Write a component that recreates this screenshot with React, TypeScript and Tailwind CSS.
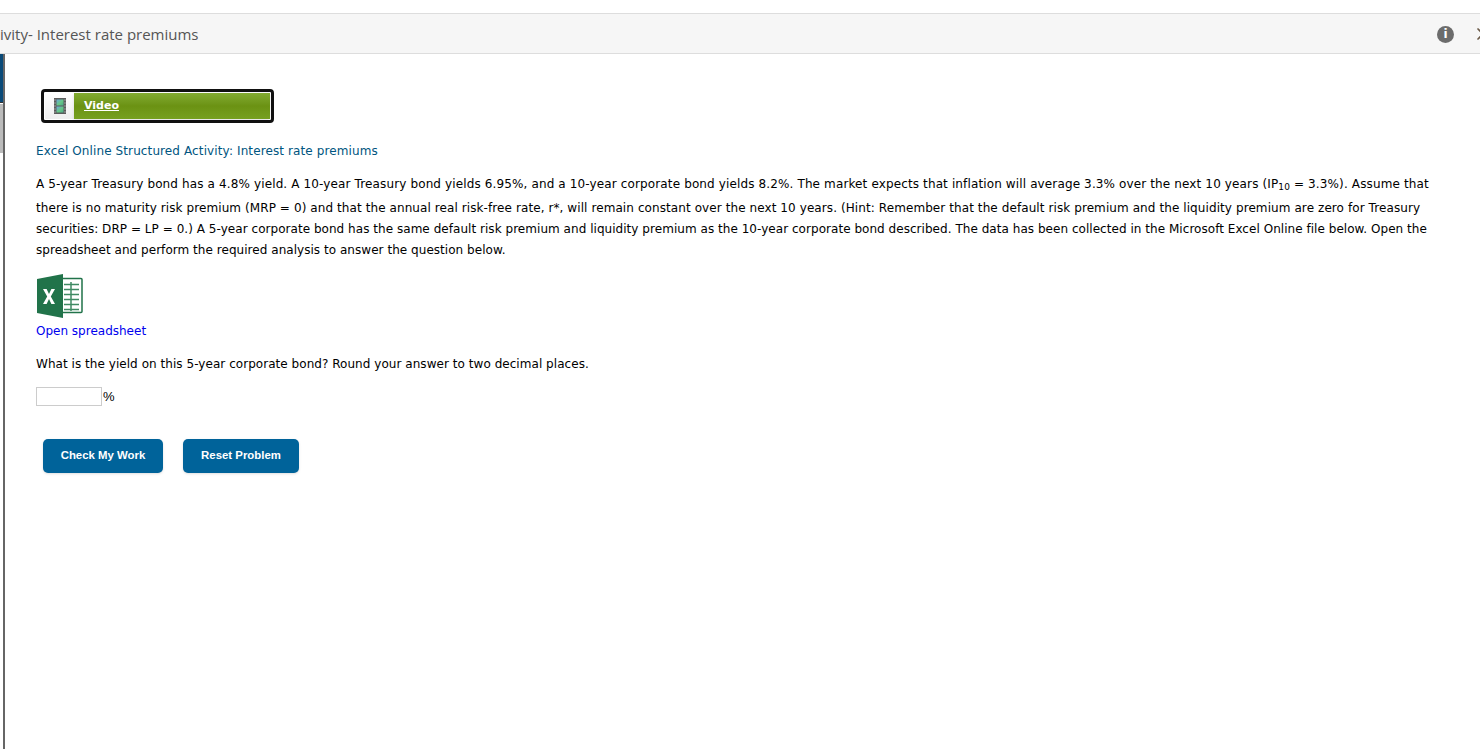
import React from 'react';
import { X } from 'lucide-react';

const body = 'font-["DejaVu_Sans",Verdana,sans-serif]';

const ExcelIcon = () => (
  <svg width="46" height="44" viewBox="0 0 46 44">
    <rect x="17" y="4.500" width="28" height="34" rx="1" fill="#ffffff" stroke="#21734a" strokeWidth="1.5" />
    <path d="M27 10.500h15M27 15.500h15M27 20.500h15M27 25.500h15M27 30.500h15M27 35.500h15" stroke="#3f8a63" strokeWidth="1.5" />
    <path d="M34 8v29" stroke="#3f8a63" strokeWidth="1.500" />
    <path d="M0 5 L26 0 V44 L0 39 Z" fill="#21734a" />
    <path d="M6 15h3.600l2.400 5 2.400-5H18l-4.200 7.500L18 30h-3.600L12 25l-2.400 5H6l4.200-7.500z" fill="#ffffff" />
  </svg>
);

const FilmIcon = () => (
  <svg width="12" height="16" viewBox="0 0 12 16">
    <defs>
      <linearGradient id="frame" x1="0" y1="0" x2="1" y2="1">
        <stop offset="0" stopColor="#6aa8dc" />
        <stop offset="0.55" stopColor="#66c884" />
        <stop offset="1" stopColor="#4aa888" />
      </linearGradient>
    </defs>
    <rect x="0" y="0" width="12" height="16" fill="#5c5c5c" />
    <rect x="2.500" y="1.500" width="7" height="6" fill="url(#frame)" />
    <rect x="2.500" y="8.500" width="7" height="6" fill="url(#frame)" />
    <path d="M.5 2h1M.5 5h1M.5 8h1M.5 11h1M.5 14h1M10.500 2h1M10.500 5h1M10.500 8h1M10.500 11h1M10.500 14h1" stroke="#d8d8d8" strokeWidth="1" />
  </svg>
);

export default function App() {
  return (
    <div className={`min-h-[749px] bg-white flex flex-col ${body}`}>
      <div className="h-[13px]" />
      {/* header */}
      <div className="h-[41px] pt-[1px] flex items-center justify-between bg-[#f6f6f6] border-y border-[#dddddd] overflow-hidden">
        <span className='text-[15px] text-[#555555] font-["Open_Sans",sans-serif]'>ivity- Interest rate premiums</span>
        <div className="flex items-center gap-[19px] -mr-[13px]">
          <span className="w-[17px] h-[17px] rounded-full bg-[#6c6c6c] text-white flex items-center justify-center text-[12px] font-bold leading-none">i</span>
          <X size={20} className="text-[#6b5a48]" />
        </div>
      </div>

      <div className="flex-1 flex">
        {/* left strip */}
        <div className="w-[5px] shrink-0 flex flex-col border-r-2 border-[#666666]">
          <div className="h-[49px] bg-[#0a4a78] border-b border-[#333333]" />
          <div className="h-[50px] bg-[#bbbbbb] border-t border-white" />
        </div>

        <div className="pl-[31px] text-[12px] text-black">
          {/* video button */}
          <div className="mt-[35px] ml-[5px] w-[233px] h-[34px] border-[3px] border-[#111111] rounded-[4px] flex p-[1px]">
            <div className="w-[29px] flex items-center justify-center bg-gradient-to-b from-white to-[#eeeeee]">
              <FilmIcon />
            </div>
            <div className="flex-1 flex items-center pl-[10px] pt-[1px] bg-gradient-to-b from-[#82ab30] via-[#6b9213] to-[#76a020] shadow">
              <span className="text-[11px] font-bold text-white underline">Video</span>
            </div>
          </div>

          <p className="mt-[19px] text-[#005580] leading-[18px] tracking-[0.11px]">Excel Online Structured Activity: Interest rate premiums</p>

          <div className="mt-[10px] w-[1420px] leading-[21px] whitespace-nowrap">
            <p className="leading-[28px] tracking-[0.13px]">
              A 5-year Treasury bond has a 4.8% yield. A 10-year Treasury bond yields 6.95%, and a 10-year corporate bond yields 8.2%. The market expects that inflation will average 3.3% over the next 10 years (IP<sub>10</sub> = 3.3%). Assume that
            </p>
            <p className="tracking-[0.087px]">there is no maturity risk premium (MRP = 0) and that the annual real risk-free rate, r*, will remain constant over the next 10 years. (Hint: Remember that the default risk premium and the liquidity premium are zero for Treasury</p>
            <p className="tracking-[0.04px]">securities: DRP = LP = 0.) A 5-year corporate bond has the same default risk premium and liquidity premium as the 10-year corporate bond described. The data has been collected in the Microsoft Excel Online file below. Open the</p>
            <p className="tracking-[0.04px]">spreadsheet and perform the required analysis to answer the question below.</p>
          </div>

          <div className="mt-[13px] ml-[1px]">
            <ExcelIcon />
          </div>
          <p className="mt-[4px] text-[#0000ee] leading-[18px]">Open spreadsheet</p>
          <p className="mt-[15px] leading-[18px] tracking-[0.045px]">What is the yield on this 5-year corporate bond? Round your answer to two decimal places.</p>

          <div className="mt-[14px] flex items-center">
            <input className="w-[66px] h-[19px] border border-[#cccccc] bg-white" />
            <span className='ml-[1px] text-[13px] font-["Liberation_Sans",sans-serif]'>%</span>
          </div>

          <div className='mt-[32px] ml-[7px] flex gap-[20px] font-["Liberation_Sans",sans-serif]'>
            <button className="w-[120px] h-[34px] rounded-[5px] bg-[#00639a] text-white text-[11.4px] font-bold shadow">Check My Work</button>
            <button className="w-[116px] h-[34px] rounded-[5px] bg-[#00639a] text-white text-[11.4px] font-bold shadow">Reset Problem</button>
          </div>
        </div>
      </div>
    </div>
  );
}
